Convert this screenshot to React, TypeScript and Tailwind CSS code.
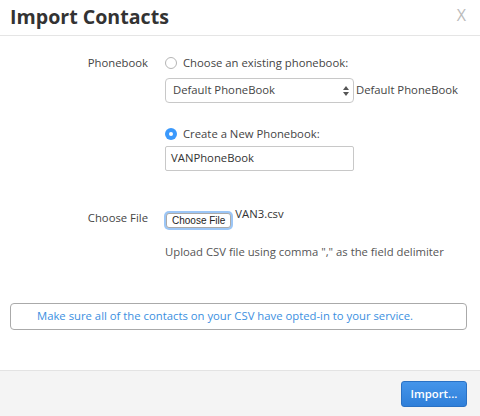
export default function App() {
  return (
    <div
      className="w-[480px] h-[416px] bg-white flex flex-col text-[#444] overflow-hidden"
      style={{ fontFamily: '"Open Sans", sans-serif' }}
    >
      {/* header */}
      <div className="h-[36px] border-b border-[#e5e5e5] flex items-center justify-between pl-[10px] pr-[14px]">
        <h1 className="text-[19.6px] font-bold text-[#333] leading-none -mt-[2px]">Import Contacts</h1>
        <span className="text-[16px] text-[#bbb] leading-none -mt-[6px]">X</span>
      </div>

      {/* body */}
      <div className="flex-1 flex flex-col text-[11.3px]">
        <div className="flex pt-[18px]">
          <div className="w-[148px] text-right pt-[1px]">Phonebook</div>
          <div className="flex flex-col pl-[17px]">
            <label className="flex items-center gap-[6px] h-[18px]">
              <span className="w-[12px] h-[12px] rounded-full border border-[#b5b5b5] bg-white" />
              Choose an existing phonebook:
            </label>
            <div className="flex items-center mt-[6px]">
              <div className="w-[189px] h-[25px] border border-[#c8c8c8] rounded-[4px] flex items-center justify-between pl-[7px] pr-[4px]">
                <span>Default PhoneBook</span>
                <svg width="6" height="10" viewBox="0 0 6 10">
                  <path d="M0 4 L3 0 L6 4 Z" fill="#555" />
                  <path d="M0 6 L3 10 L6 6 Z" fill="#555" />
                </svg>
              </div>
              <span className="ml-[2px]">Default PhoneBook</span>
            </div>
            <label className="flex items-center gap-[6px] h-[18px] mt-[22px]">
              <span className="w-[12px] h-[12px] rounded-full bg-[#3b99fc] flex items-center justify-center">
                <span className="w-[4px] h-[4px] rounded-full bg-white" />
              </span>
              Create a New Phonebook:
            </label>
            <div className="w-[189px] h-[25px] border border-[#c8c8c8] rounded-[2px] flex items-center pl-[5px] mt-[3px] text-[#333]">
              VANPhoneBook
            </div>
          </div>
        </div>

        <div className="flex mt-[36px]">
          <div className="w-[148px] text-right pt-[3px]">Choose File</div>
          <div className="flex flex-col pl-[18px]">
            <div className="flex items-start">
              <button
                type="button"
                className="h-[15px] px-[5px] mt-[6px] text-[10px] leading-none text-[#222] bg-white border border-[#aaa] rounded-[3px] shadow-[0_0_0_2px_rgba(90,160,240,0.6)]"
                style={{ fontFamily: '"Liberation Sans", sans-serif' }}
              >
                Choose File
              </button>
              <span className="text-[#333] ml-[4px] leading-none mt-[1px]">VAN3.csv</span>
            </div>
            <p className="text-[#555] mt-[16px] -ml-[1px]">
              Upload CSV file using comma "," as the field delimiter
            </p>
          </div>
        </div>

        <div className="ml-[10px] mr-[13px] mt-[42px] h-[27px] border border-[#aaa] rounded-[4px] flex items-center pl-[26px] text-[#3b8fdf]">
          Make sure all of the contacts on your CSV have opted-in to your service.
        </div>
      </div>

      {/* footer */}
      <div className="h-[46px] border-t border-[#e3e3e3] bg-[#f4f4f4] flex items-center justify-end pr-[13px]">
        <button
          type="button"
          className="w-[66px] h-[26px] mt-[1px] rounded-[3px] border border-[#2a71c4] bg-gradient-to-b from-[#4595ea] to-[#2f7fd9] text-white text-[11.3px] font-semibold"
        >
          Import...
        </button>
      </div>
    </div>
  );
}
